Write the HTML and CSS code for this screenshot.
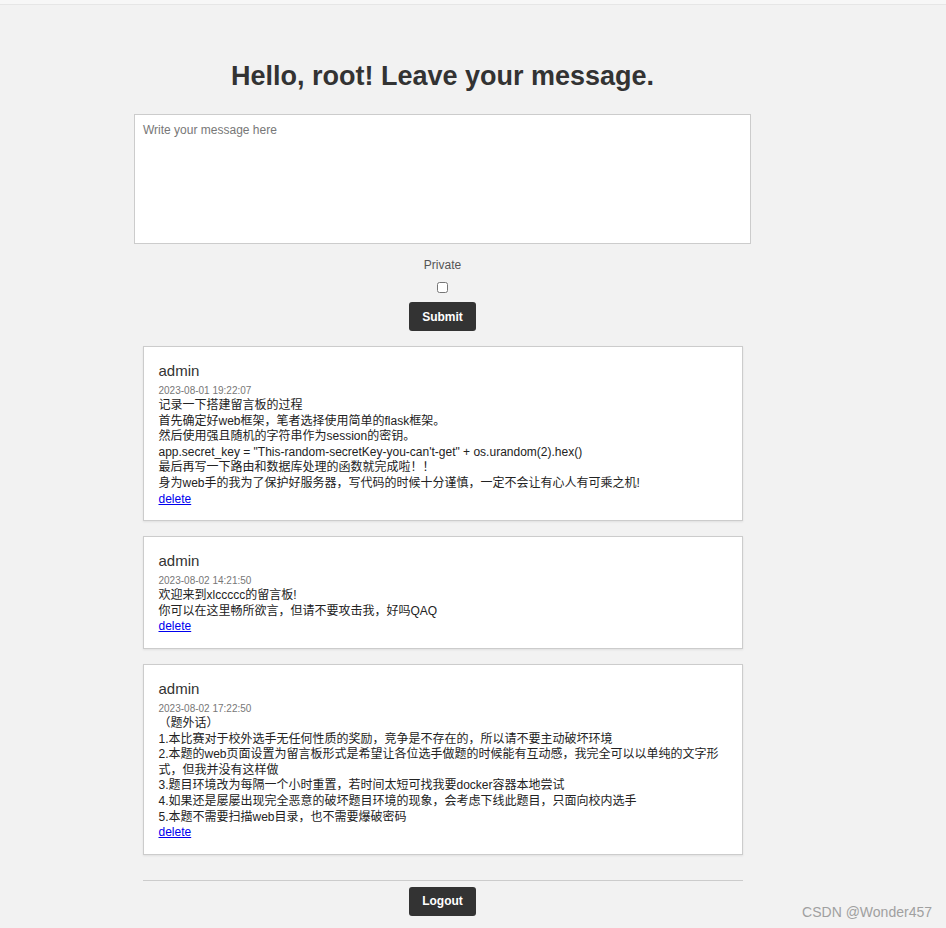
FILE: index.html
```html
<!DOCTYPE html>
<html lang="zh">
<head>
<meta charset="UTF-8">
<title>留言板</title>
<link rel="stylesheet" href="styles.css">
</head>
<body>
    <div class="topbar"></div>
    <div class="page">
        <h1>Hello, root! Leave your message.</h1>
        <form class="post-form">
            <textarea placeholder="Write your message here"></textarea>
            <label class="private-label">Private</label>
            <input type="checkbox" class="private-check">
            <button type="button" class="btn">Submit</button>
        </form>

        <div class="message">
            <h3>admin</h3>
            <div class="date">2023-08-01 19:22:07</div>
            <div class="text">记录一下搭建留言板的过程<br>首先确定好web框架，笔者选择使用简单的flask框架。<br>然后使用强且随机的字符串作为session的密钥。<br>app.secret_key = "This-random-secretKey-you-can't-get" + os.urandom(2).hex()<br>最后再写一下路由和数据库处理的函数就完成啦！！<br>身为web手的我为了保护好服务器，写代码的时候十分谨慎，一定不会让有心人有可乘之机!</div>
            <a href="#" class="del">delete</a>
        </div>

        <div class="message">
            <h3>admin</h3>
            <div class="date">2023-08-02 14:21:50</div>
            <div class="text">欢迎来到xlccccc的留言板!<br>你可以在这里畅所欲言，但请不要攻击我，好吗QAQ</div>
            <a href="#" class="del">delete</a>
        </div>

        <div class="message">
            <h3>admin</h3>
            <div class="date">2023-08-02 17:22:50</div>
            <div class="text">（题外话）<br>1.本比赛对于校外选手无任何性质的奖励，竞争是不存在的，所以请不要主动破坏环境<br>2.本题的web页面设置为留言板形式是希望让各位选手做题的时候能有互动感，我完全可以以单纯的文字形式，但我并没有这样做<br>3.题目环境改为每隔一个小时重置，若时间太短可找我要docker容器本地尝试<br>4.如果还是屡屡出现完全恶意的破坏题目环境的现象，会考虑下线此题目，只面向校内选手<br>5.本题不需要扫描web目录，也不需要爆破密码</div>
            <a href="#" class="del">delete</a>
        </div>

        <hr class="sep">
        <button type="button" class="btn">Logout</button>
    </div>
    <div class="watermark">CSDN @Wonder457</div>
</body>
</html>
```

FILE: styles.css
```css
body {
    margin: 0;
    padding: 0;
    background-color: #f2f2f2;
    font-family: 'Liberation Sans', Arial, 'Noto Sans CJK SC', sans-serif;
    color: #333;
}
.topbar {
    height: 4px;
    background-color: #f7f7f7;
    border-bottom: 1px solid #e6e6e6;
}
.page {
    width: 885px;
    display: flex;
    flex-direction: column;
    align-items: center;
}
h1 {
    font-size: 27px;
    font-weight: bold;
    color: #333;
    margin: 55px 0 0;
    line-height: 32px;
}
.post-form {
    display: flex;
    flex-direction: column;
    align-items: center;
    margin-top: 22px;
}
.post-form textarea {
    width: 617px;
    height: 130px;
    box-sizing: border-box;
    padding: 8px;
    border: 1px solid #ccc;
    background: #fff;
    font-family: 'Liberation Sans', Arial, sans-serif;
    font-size: 12px;
    resize: none;
    display: block;
}
.post-form textarea::placeholder {
    color: #777;
}
.private-label {
    font-size: 12px;
    color: #555;
    line-height: 15px;
    margin-top: 14px;
}
.private-check {
    width: 11px;
    height: 11px;
    margin: 9px 0 9px;
}
.btn {
    background-color: #333;
    color: #fff;
    border: none;
    border-radius: 3px;
    width: 67px;
    height: 29px;
    font-family: 'Liberation Sans', Arial, sans-serif;
    font-size: 12px;
    font-weight: bold;
    padding: 0;
}
.message {
    width: 600px;
    box-sizing: border-box;
    margin-top: 15px;
    padding: 15px 15px 13px;
    background: #fff;
    border: 1px solid #ccc;
    box-shadow: 0 1px 2px rgba(0, 0, 0, 0.08);
    text-align: left;
}
.message h3 {
    font-size: 15px;
    font-weight: normal;
    line-height: 18px;
    margin: 0 0 4px;
    color: #333;
}
.date {
    font-size: 10px;
    line-height: 13px;
    color: #777;
    margin-bottom: 1px;
}
.text, .del {
    font-size: 12px;
    line-height: 15.6px;
    color: #222;
}
.del {
    display: block;
    width: max-content;
    color: #00e;
}
.sep {
    width: 600px;
    margin: 25px 0 6px;
    border: none;
    border-top: 1px solid #ccc;
}
.watermark {
    position: absolute;
    right: 14px;
    top: 904px;
    font-size: 14px;
    color: #a0a0a0;
}
```
